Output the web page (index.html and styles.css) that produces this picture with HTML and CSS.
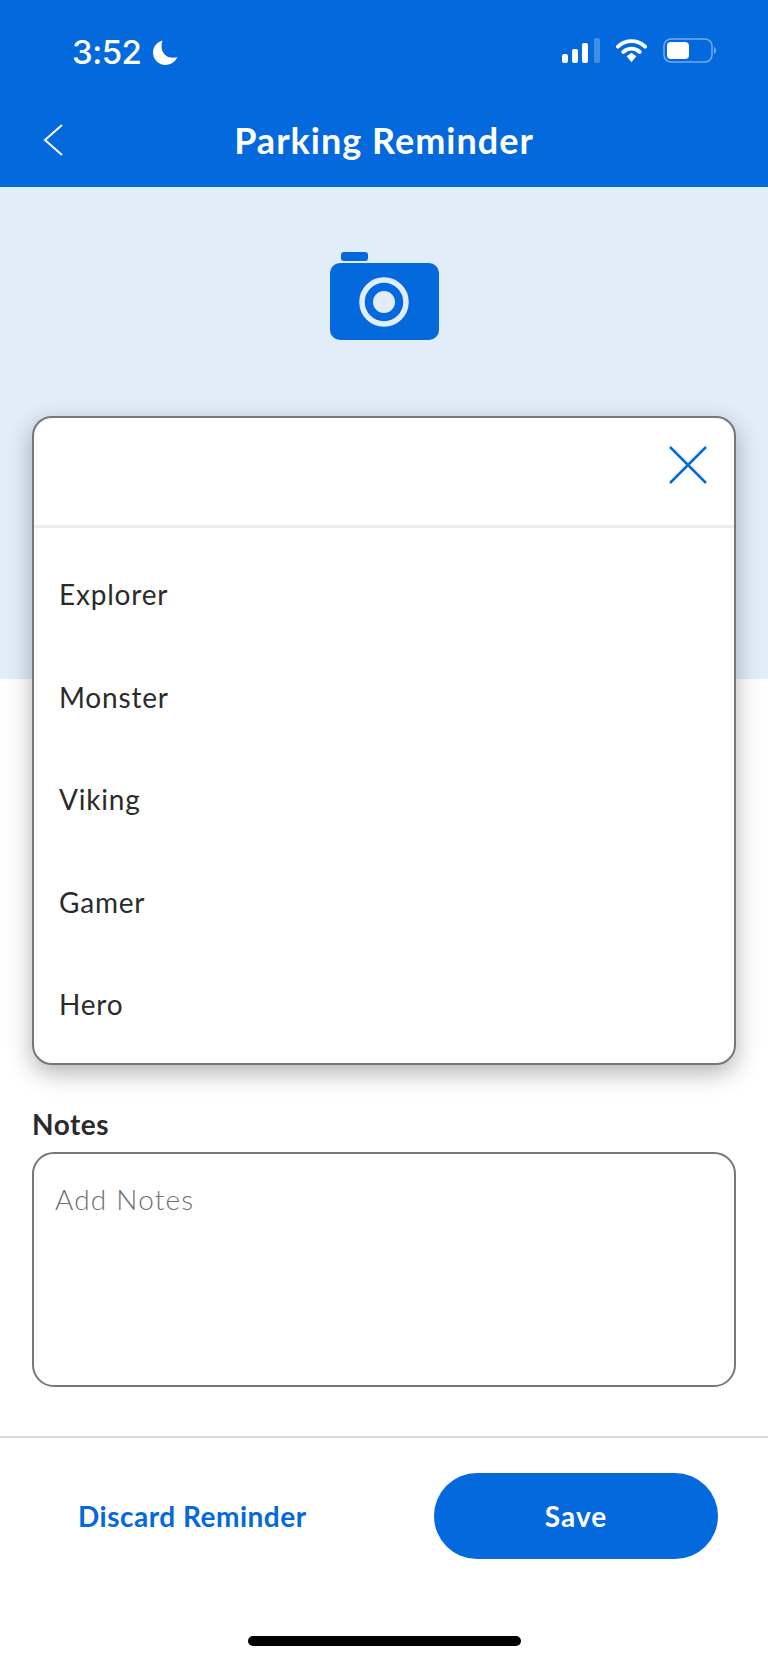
FILE: index.html
```html
<!DOCTYPE html>
<html lang="en">
<head>
    <meta charset="UTF-8">
    <meta name="viewport" content="width=device-width, initial-scale=1.0">
    <title>Parking Reminder</title>
    <link rel="stylesheet" href="styles.css">
</head>
<body>
    <div class="screen">
        <header class="app-header">
            <div class="status-bar">
                <div class="status-left">
                    <span class="status-time">3:52</span>
                    <svg class="moon" width="27" height="27" viewBox="0 0 27 27">
                        <path d="M10.5 1.5C4.8 3 1 7.8 1 13.6 1 20.6 6.6 26 13.4 26c5.4 0 10-3.2 12.1-8.2-1.3.7-2.9 1-4.6 1-6.400 0-11.400-5-11.400-11.300 0-2.200.3-4.200 1-6z" fill="#fff"></path>
                    </svg>
                </div>
                <div class="status-right">
                    <svg width="38" height="25" viewBox="0 0 38 25">
                        <rect x="0" y="16" width="6" height="9" rx="2" fill="#fff"></rect>
                        <rect x="10" y="11" width="6" height="14" rx="2" fill="#fff"></rect>
                        <rect x="20" y="5" width="6" height="20" rx="2" fill="#fff"></rect>
                        <rect x="32" y="0" width="6" height="25" rx="2" fill="#fff" opacity="0.25"></rect>
                    </svg>
                    <svg width="31" height="25" viewBox="0 0 32 25">
                        <path d="M2 8.500C10 1 22 1 30 8.500" fill="none" stroke="#fff" stroke-width="4" stroke-linecap="round"></path>
                        <path d="M7.500 14C12.500 9.500 19.500 9.500 24.500 14" fill="none" stroke="#fff" stroke-width="4" stroke-linecap="round"></path>
                        <path d="M11 18.500 16 14.800 21 18.500 16 24.500z" fill="#fff"></path>
                    </svg>
                    <svg width="54" height="25" viewBox="0 0 54 25">
                        <rect x="1" y="1" width="48" height="23" rx="7" fill="none" stroke="#fff" stroke-opacity="0.45" stroke-width="1.500"></rect>
                        <rect x="4" y="4" width="22" height="17" rx="4" fill="#fff"></rect>
                        <path d="M51 9c1.200.5 2 2 2 3.500s-.8 3-2 3.500z" fill="#fff" opacity="0.45"></path>
                    </svg>
                </div>
            </div>
            <div class="nav-bar">
                <svg class="back-icon" width="22" height="34" viewBox="0 0 22 34">
                    <path d="M20 2 3 17 20 32" fill="none" stroke="#fff" stroke-width="2"></path>
                </svg>
                <h1>Parking Reminder</h1>
            </div>
        </header>

        <section class="hero">
            <svg width="110" height="89" viewBox="0 0 110 89">
                <rect x="12" y="0" width="27" height="9" rx="3" fill="#0369dc"></rect>
                <rect x="1" y="11" width="109" height="77" rx="10" fill="#0369dc"></rect>
                <circle cx="55" cy="50" r="22" fill="none" stroke="#e2edfa" stroke-width="5.500"></circle>
                <circle cx="55" cy="50" r="11" fill="#e2edfa"></circle>
            </svg>
        </section>

        <main class="form">
            <label class="field-label">Notes</label>
            <div class="notes-box">Add Notes</div>
        </main>

        <footer class="footer">
            <div class="footer-actions">
                <a class="discard">Discard Reminder</a>
                <button class="save-btn">Save</button>
            </div>
            <div class="home-bar"></div>
        </footer>

        <div class="picker">
            <div class="picker-head">
                <svg width="40" height="40" viewBox="0 0 40 40">
                    <path d="M2 2 38 38M38 2 2 38" fill="none" stroke="#0369dc" stroke-width="2.500"></path>
                </svg>
            </div>
            <ul class="picker-list">
                <li>Explorer</li>
                <li>Monster</li>
                <li>Viking</li>
                <li>Gamer</li>
                <li>Hero</li>
            </ul>
        </div>
    </div>
</body>
</html>
```

FILE: styles.css
```css
* {
    margin: 0;
    padding: 0;
    box-sizing: border-box;
}

body {
    font-family: 'Lato', sans-serif;
    background: #fff;
    color: #2b2b2b;
}

.screen {
    position: relative;
    width: 768px;
    height: 1662px;
    display: flex;
    flex-direction: column;
    overflow: hidden;
}

.app-header {
    height: 187px;
    background: #0369dc;
    color: #fff;
}

.status-bar {
    height: 113px;
    padding: 38px 51px 0 72px;
    display: flex;
    justify-content: space-between;
    align-items: flex-start;
}

.status-left {
    display: flex;
    align-items: center;
    gap: 11px;
}

.status-time {
    font-family: 'Inter', sans-serif;
    font-size: 33px;
    font-weight: 500;
    line-height: 28px;
    letter-spacing: -0.5px;
}

.status-right {
    display: flex;
    gap: 16px;
}

.nav-bar {
    position: relative;
    display: flex;
    justify-content: center;
    align-items: center;
    height: 54px;
}

.back-icon {
    position: absolute;
    left: 42px;
    top: 10px;
}

h1 {
    font-size: 36px;
    font-weight: 700;
    line-height: 54px;
    letter-spacing: 1px;
}

.hero {
    height: 492px;
    background: #e2edfa;
    display: flex;
    justify-content: center;
    padding-top: 65px;
}

.form {
    flex: 1;
    padding: 429px 32px 0;
}

.field-label {
    display: block;
    font-size: 28px;
    font-weight: 700;
    line-height: 32px;
    letter-spacing: 0.5px;
    margin-bottom: 12px;
}

.notes-box {
    height: 235px;
    border: 2px solid #777;
    border-radius: 22px;
    padding: 25px 21px;
    font-size: 28px;
    font-weight: 300;
    line-height: 40px;
    letter-spacing: 1.2px;
    color: #6f6f6f;
}

.footer {
    height: 226px;
    border-top: 2px solid #ddd;
    position: relative;
}

.footer-actions {
    display: flex;
    justify-content: space-between;
    align-items: center;
    padding: 35px 50px 0 78px;
}

.discard {
    font-size: 28px;
    font-weight: 700;
    letter-spacing: 0.5px;
    color: #0369dc;
}

.save-btn {
    width: 284px;
    height: 86px;
    border: none;
    border-radius: 43px;
    background: #0369dc;
    color: #fff;
    font-family: 'Lato', sans-serif;
    font-size: 28px;
    font-weight: 700;
    letter-spacing: 1px;
}

.home-bar {
    width: 273px;
    height: 10px;
    margin: 77px auto 0;
    border-radius: 5px;
    background: #000;
}

.picker {
    position: absolute;
    left: 32px;
    top: 416px;
    width: 704px;
    height: 649px;
    background: #fff;
    border: 2px solid #777;
    border-radius: 20px;
    box-shadow: 0 8px 24px rgba(0, 0, 0, 0.3);
}

.picker-head {
    height: 110px;
    border-bottom: 3px solid #ececec;
    display: flex;
    justify-content: flex-end;
    padding: 27px 26px 0 0;
}

.picker-list {
    list-style: none;
    padding-top: 15px;
}

.picker-list li {
    height: 102.500px;
    line-height: 102.500px;
    padding-left: 25px;
    font-size: 28px;
    letter-spacing: 0.8px;
}
```
